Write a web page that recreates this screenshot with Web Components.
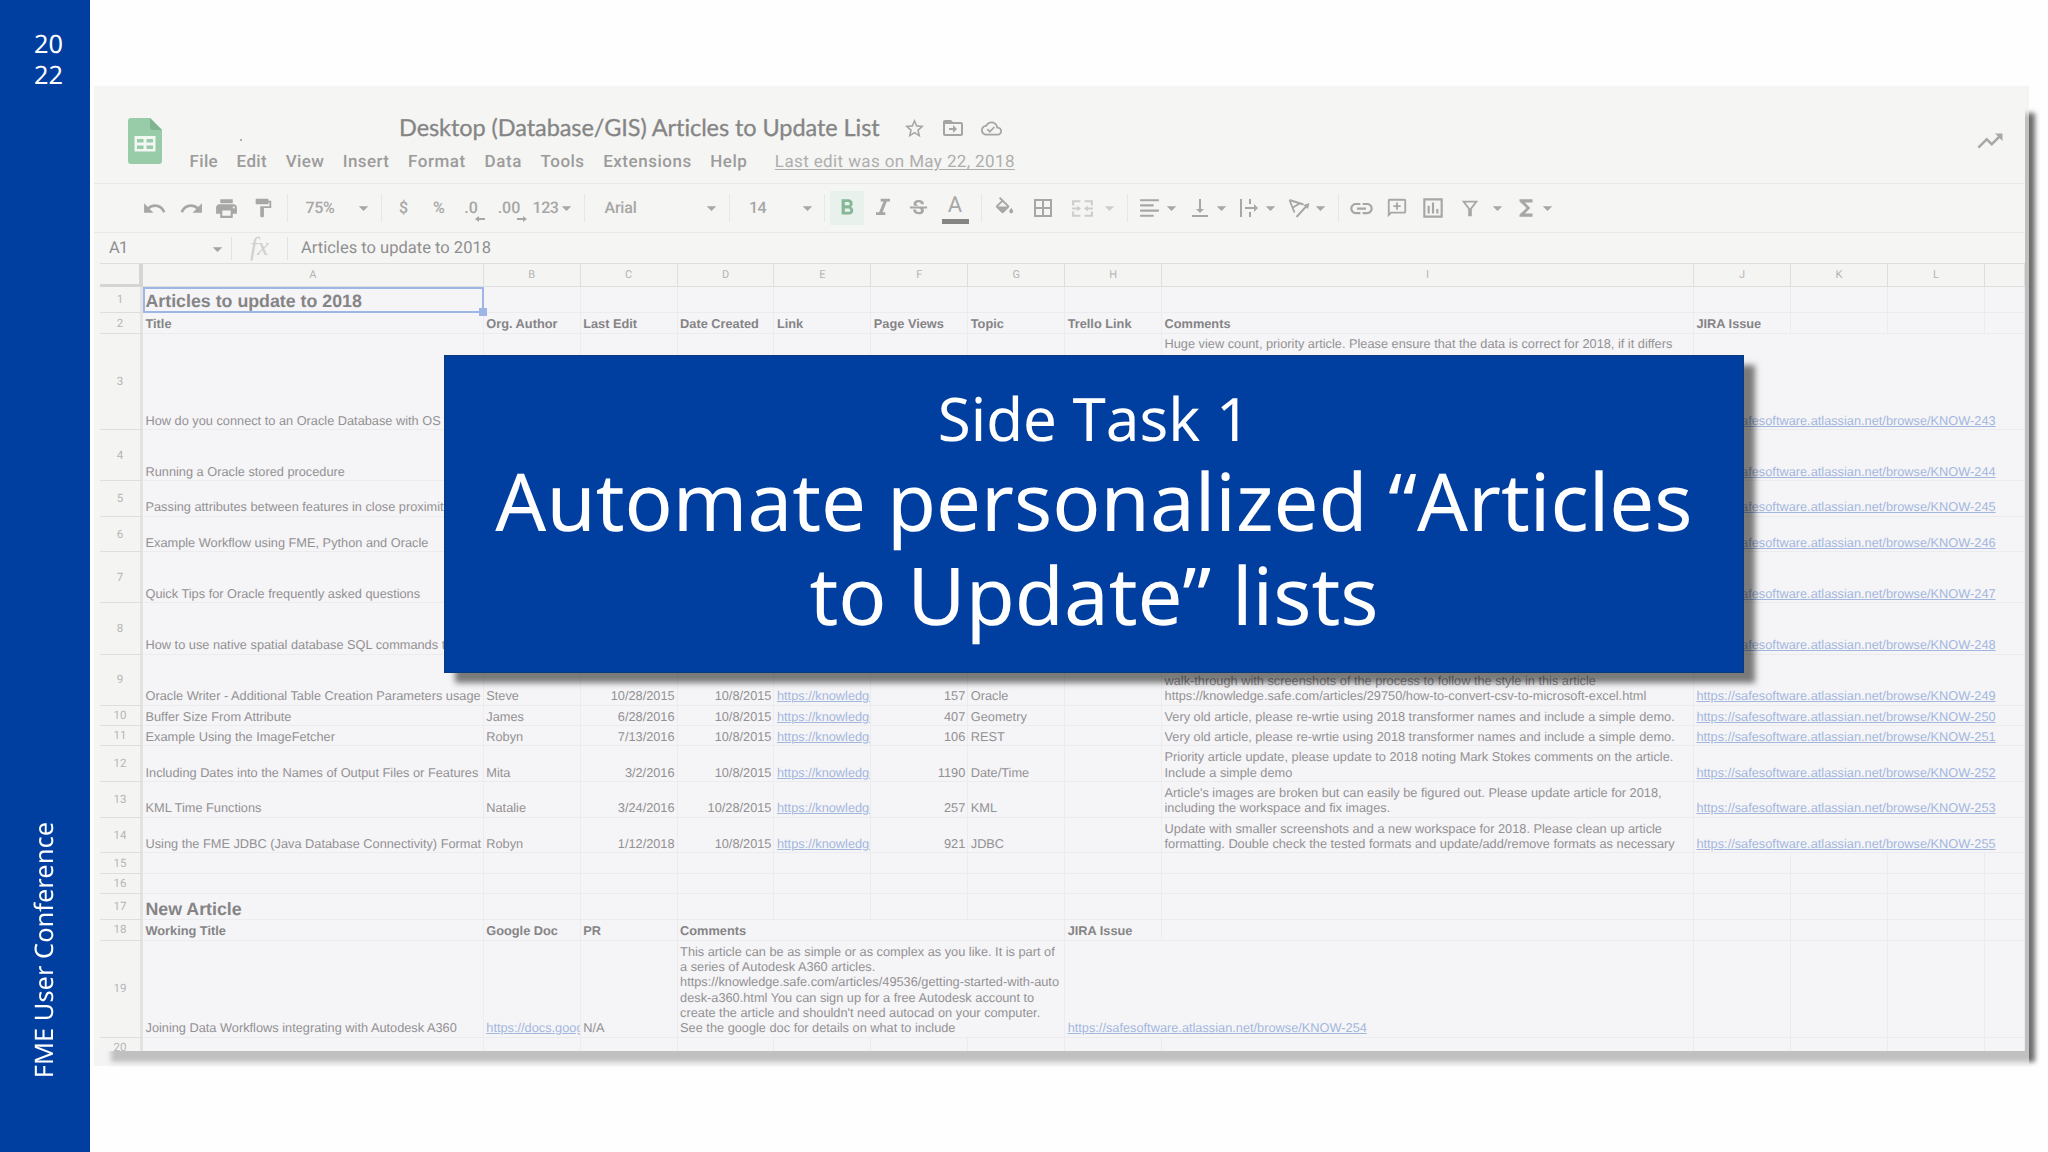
<!DOCTYPE html>
<html lang="en">
<head>
    <meta charset="UTF-8">
    <title>FME User Conference</title>
    <style>
    body{
        margin: 0;
        width: 2048px;
        height: 1152px;
        overflow: hidden;
        background: #fefefe;
        font-family: "Liberation Sans", Arial, sans-serif;
        text-rendering: geometricPrecision;
    }
    </style>
</head>
<body>
    <script>
    // puts a template into an open shadow root
    function shadow(el, html) {
        const template = document.createElement('template');
        template.innerHTML = html;
        el.attachShadow({ mode: 'open' }).appendChild(template.content.cloneNode(true));
        return el.shadowRoot;
    }

    const icons = {
        undo: '<path d="M12.5 8c-2.65 0-5.05.99-6.9 2.6L2 7v9h9l-3.62-3.62c1.39-1.16 3.16-1.88 5.12-1.88 3.54 0 6.55 2.31 7.6 5.5l2.37-.78C21.08 11.03 17.15 8 12.5 8z"/>',
        redo: '<path d="M18.4 10.6C16.55 8.99 14.15 8 11.5 8c-4.65 0-8.58 3.03-9.96 7.22L3.9 16c1.05-3.19 4.05-5.5 7.6-5.5 1.95 0 3.73.72 5.12 1.88L13 16h9V7l-3.6 3.6z"/>',
        print: '<path d="M19 8H5c-1.66 0-3 1.34-3 3v6h4v4h12v-4h4v-6c0-1.66-1.34-3-3-3zm-3 11H8v-5h8v5zm3-7c-.55 0-1-.45-1-1s.45-1 1-1 1 .45 1 1-.45 1-1 1zm-1-9H6v4h12V3z"/>',
        paint: '<path d="M18 4V3c0-.55-.45-1-1-1H5c-.55 0-1 .45-1 1v4c0 .55.45 1 1 1h12c.55 0 1-.45 1-1V6h1v4H9v11c0 .55.45 1 1 1h2c.55 0 1-.45 1-1v-9h8V4h-3z"/>',
        caret: '<path d="M6 9l6 6 6-6z"/>',
        bold: '<path d="M15.6 10.79c.97-.67 1.65-1.77 1.65-2.79 0-2.26-1.75-4-4-4H7v14h7.04c2.09 0 3.71-1.7 3.71-3.79 0-1.52-.86-2.82-2.15-3.42zM10 6.5h3c.83 0 1.5.67 1.5 1.5s-.67 1.5-1.5 1.5h-3v-3zm3.5 9H10v-3h3.5c.83 0 1.5.67 1.5 1.5s-.67 1.5-1.5 1.5z"/>',
        italic: '<path d="M10 4v2.4h2.4l-3.7 9.2H6V18h8v-2.400h-2.400l3.700-9.200H18V4z"/>',
        strike: '<path d="M6.85 7.08C6.85 4.37 9.45 3 12.24 3c1.64 0 3 .49 3.9 1.28.77.65 1.46 1.73 1.46 3.24h-3.01c0-.31-.05-.59-.15-.85-.29-.86-1.2-1.28-2.25-1.28-1.86 0-2.34 1.02-2.34 1.7 0 .48.25.88.74 1.21.38.25.77.48 1.41.7H7.39c-.21-.34-.54-.89-.54-1.92zM21 12v-2H3v2h9.62c1.15.45 1.96.75 1.96 1.97 0 1-.81 1.67-2.28 1.67-1.54 0-2.93-.54-2.93-2.51H6.4c0 .55.08 1.13.24 1.58.81 2.29 3.29 3.3 5.67 3.3 2.27 0 5.3-.89 5.3-4.05 0-.3-.01-1.16-.48-1.94H21V12z"/>',
        fill: '<path d="M16.56 8.94L7.62 0 6.21 1.41l2.38 2.38-5.15 5.15c-.59.59-.59 1.54 0 2.12l5.5 5.5c.29.29.68.44 1.06.44s.77-.15 1.06-.44l5.5-5.5c.59-.58.59-1.53 0-2.12zM5.21 10L10 5.21 14.79 10H5.21zM19 11.5s-2 2.17-2 3.5c0 1.1.9 2 2 2s2-.9 2-2c0-1.33-2-3.5-2-3.5z"/>',
        borders: '<path d="M3 3v18h18V3H3zm8 16H5v-6h6v6zm0-8H5V5h6v6zm8 8h-6v-6h6v6zm0-8h-6V5h6v6z"/>',
        merge: '<path d="M2 4h8v2H4v3H2zM14 4h8v5h-2V6h-6zM2 15h2v3h6v2H2zM20 15h2v5h-8v-2h6zM2 11h5V9l3.5 3L7 15v-2H2zM22 11h-5V9l-3.500 3 3.500 3v-2h5z"/>',
        align: '<path d="M3 3h18v2H3zM3 8h13v2H3zM3 13h18v2H3zM3 18h13v2H3z"/>',
        valign: '<path d="M16 13h-3V3h-2v10H8l4 4 4-4zM4 19v2h16v-2H4z"/>',
        wrap: '<path d="M3 3h2v18H3zM12 3h2v5h-2zM12 16h2v5h-2zM8 11h9V8l4 4-4 4v-3H8z"/>',
        rotate: '<path fill="none" stroke="currentColor" stroke-width="1.9" d="M2.500 4l14 4.500M2.500 4l5 12.500M6 11.500l6.500-4M9.500 21L20 9.500"/><path d="M22.500 7l-1.500 6-4.500-4z"/>',
        link: '<path d="M3.900 12c0-1.710 1.390-3.100 3.100-3.100h4V7H7c-2.760 0-5 2.240-5 5s2.240 5 5 5h4v-1.900H7c-1.710 0-3.100-1.390-3.100-3.100zM8 13h8v-2H8v2zm9-6h-4v1.900h4c1.710 0 3.100 1.390 3.100 3.100s-1.390 3.100-3.100 3.100h-4V17h4c2.760 0 5-2.240 5-5s-2.240-5-5-5z"/>',
        comment: '<path d="M20 2H4c-1.100 0-2 .9-2 2v18l4-4h14c1.100 0 2-.9 2-2V4c0-1.100-.9-2-2-2zm0 14H5.200L4 17.200V4h16v12zM11 14h2v-3h3V9h-3V6h-2v3H8v2h3z"/>',
        chart: '<path d="M3 3v18h18V3zm16 16H5V5h14zM7 10h2v7H7zM11 7h2v10h-2zM15 13h2v4h-2z"/>',
        filter: '<path d="M3 4h18l-7 9v8h-4v-8zm4 2l5 6.500L17 6z" fill-rule="evenodd"/>',
        sigma: '<path d="M18 4H6v2l6.500 6L6 18v2h12v-3h-7l5-5-5-5h7z"/>',
        star: '<path d="M22 9.240l-7.190-.62L12 2 9.190 8.630 2 9.240l5.460 4.730L5.820 21 12 17.270 18.180 21l-1.630-7.030L22 9.240zM12 15.400l-3.760 2.270 1-4.280-3.320-2.880 4.380-.38L12 6.100l1.710 4.040 4.380.38-3.320 2.880 1 4.280L12 15.400z"/>',
        move: '<path d="M20 6h-8l-2-2H4c-1.100 0-2 .9-2 2v12c0 1.100.9 2 2 2h16c1.100 0 2-.9 2-2V8c0-1.100-.9-2-2-2zm0 12H4V8h16v10zm-8-1l4-4-4-4v3H8v2h4z"/>',
        cloud: '<path d="M19.350 10.040C18.670 6.590 15.640 4 12 4 9.110 4 6.600 5.640 5.350 8.040 2.340 8.360 0 10.910 0 14c0 3.310 2.690 6 6 6h13c2.760 0 5-2.240 5-5 0-2.640-2.050-4.780-4.650-4.960zM19 18H6c-2.210 0-4-1.790-4-4 0-2.050 1.530-3.760 3.560-3.970l1.070-.11.5-.95C8.080 7.140 9.940 6 12 6c2.620 0 4.880 1.860 5.390 4.430l.3 1.500 1.530.11c1.560.1 2.780 1.410 2.780 2.960 0 1.650-1.350 3-3 3zm-9-3.820l-2.090-2.090L6.500 13.500 10 17l6.010-6.010-1.410-1.410z"/>',
        trend: '<path d="M16 6l2.290 2.290-4.880 4.880-4-4L2 16.590 3.410 18l6-6 4 4 6.300-6.290L22 12V6z"/>'
    };

    class UiIcon extends HTMLElement {
        connectedCallback() {
            const size = this.getAttribute('size') || 25;
            shadow(this, `
            <style>
            :host{ display: block; flex: none; width: ${size}px; height: ${size}px; }
            svg{ display: block; width: 100%; height: 100%; fill: currentColor; overflow: visible; }
            </style>
            <svg viewBox="0 0 24 24">${icons[this.getAttribute('name')]}</svg>`);
        }
    }
    customElements.define('ui-icon', UiIcon);

    // one line of text, tracked to a given width
    class FitText extends HTMLElement {
        connectedCallback() {
            const root = shadow(this, `
            <style>
            :host{ display: block; flex: none; white-space: nowrap; }
            span{ display: inline-block; text-decoration: inherit; text-underline-offset: 2px; }
            </style>
            <span><slot></slot></span>`);
            const width = Number(this.getAttribute('width'));
            const span = root.querySelector('span');
            const natural = span.getBoundingClientRect().width;
            span.style.letterSpacing = (width - natural) / this.textContent.length + 'px';
            this.style.width = width + 'px';
        }
    }
    customElements.define('fit-text', FitText);

    class SideRail extends HTMLElement {
        constructor() {
            super();
            shadow(this, `
            <style>
            :host{
                display: flex;
                flex-direction: column;
                justify-content: space-between;
                flex: none;
                box-sizing: border-box;
                width: 90px;
                height: 1152px;
                padding: 28.500px 0 73.500px;
                background: #003f9f;
                color: #fff;
                font-family: "Noto Sans", sans-serif;
                font-kerning: none;
            }
            .year{ width: 32px; margin-left: 34px; font-size: 25.300px; line-height: 31px; }
            .name{
                writing-mode: vertical-rl;
                transform: rotate(180deg);
                margin-left: 28px;
                width: 32px;
                line-height: 32px;
                font-size: 25.450px;
                white-space: nowrap;
            }
            </style>
            <div class="year"><slot name="year"></slot></div>
            <div class="name"><slot></slot></div>`);
        }
    }
    customElements.define('side-rail', SideRail);

    class SheetHead extends HTMLElement {
        constructor() {
            super();
            shadow(this, `
            <style>
            :host{
                display: flex;
                box-sizing: border-box;
                height: 97px;
                padding-left: 34px;
                color: #8b8b8a;
                font-family: Roboto, sans-serif;
            }
            .logo{ flex: none; width: 34px; height: 46px; margin-top: 32px; }
            .rows{ flex: 1; }
            .title{ display: flex; align-items: center; height: 28px; padding: 28px 0 0 237px; color: #858585; }
            .title fit-text{ font: 23.5px/28px Lato, sans-serif; -webkit-text-stroke: .3px #858585; margin-right: 22.500px; }
            .title ui-icon{ color: #a5a5a4; margin-right: 15.500px; }
            .title ui-icon + ui-icon{ margin-right: 16.500px; margin-left: -.5px; }
            .dot{ width: 2px; height: 2px; margin: -3px 0 0 78px; background: #999; border-radius: 1px; }
            .menu{ display: flex; gap: 18.600px; margin: 11px 0 0 27.500px; font-size: 17px; line-height: 20px; font-weight: 500; color: #9c9c9b; }
            .last{ margin-left: 9px; font-weight: 400; color: #aeaead; text-decoration: underline; }
            .trend{ margin: 39.500px 20px 0 0; color: #a8a8a7; }
            </style>
            <svg class="logo" viewBox="0 0 34 46">
                <path fill="#98cba8" d="M3 0h19l12 12v31a3 3 0 0 1-3 3H3a3 3 0 0 1-3-3V3a3 3 0 0 1 3-3z"/>
                <path fill="#7fb391" d="M22 0l12 12H25a3 3 0 0 1-3-3z"/>
                <path fill="#f2f7f2" d="M6.500 18h21v15.500h-21z"/>
                <path fill="#98cba8" d="M9 21h6.500v3.500H9zM18.500 21H25v3.500h-6.500zM9 27.500h6.500V31H9zM18.500 27.500H25V31h-6.500z"/>
            </svg>
            <div class="rows">
                <div class="title">
                    <fit-text width="481">Desktop (Database/GIS) Articles to Update List</fit-text>
                    <ui-icon name="star" size="23"></ui-icon>
                    <ui-icon name="move" size="24"></ui-icon>
                    <ui-icon name="cloud" size="21"></ui-icon>
                </div>
                <div class="dot"></div>
                <div class="menu">
                    <fit-text width="28.500">File</fit-text>
                    <fit-text width="30.500">Edit</fit-text>
                    <fit-text width="38.500">View</fit-text>
                    <fit-text width="46.500">Insert</fit-text>
                    <fit-text width="58">Format</fit-text>
                    <fit-text width="37.500">Data</fit-text>
                    <fit-text width="44">Tools</fit-text>
                    <fit-text width="88.500">Extensions</fit-text>
                    <fit-text width="37">Help</fit-text>
                    <fit-text class="last" width="240">Last edit was on May 22, 2018</fit-text>
                </div>
            </div>
            <ui-icon class="trend" name="trend" size="30"></ui-icon>`);
        }
    }
    customElements.define('sheet-head', SheetHead);

    // [centre, width, markup] of each tool, left to right
    const icon = (name, size) => `<ui-icon name="${name}" size="${size || 25}"></ui-icon>`;
    const caret = icon('caret', 19);
    const sep = '<i class="sep"></i>';
    const tools = [
        [154.500, 25, icon('undo')], [191, 25, icon('redo')], [226.500, 25, icon('print')], [262.500, 25, icon('paint', 22)],
        [287, 1, sep], [320, 30, '<fit-text width="29">75%</fit-text>'], [363.500, 19, caret], [381, 1, sep],
        [403.500, 10, '<span>$</span>'], [439, 14, '<span>%</span>'],
        [471, 18, '<span class="dec">.0<svg viewBox="0 0 10 6"><path d="M0 3l4-3v2h6v2H4v2z"/></svg></span>'],
        [509, 24, '<span class="dec">.00<svg viewBox="0 0 10 6"><path d="M10 3L6 0v2H0v2h6v2z"/></svg></span>'],
        [545.500, 26, '<fit-text width="26">123</fit-text>'], [566, 15, icon('caret', 19)], [584, 1, sep],
        [620.500, 32, '<fit-text width="32">Arial</fit-text>'], [711, 19, caret], [729, 1, sep],
        [757.500, 17, '<fit-text width="17">14</fit-text>'], [807, 19, caret], [824, 1, sep],
        [847, 34, '<b class="on">' + icon('bold', 26) + '</b>'], [882.500, 25, icon('italic', 28)], [918, 24, icon('strike', 23)],
        [955, 27, '<span class="colour">A</span>'], [981, 1, sep],
        [1004.500, 24, icon('fill', 23)], [1043, 24, icon('borders', 24)], [1082, 25, '<span class="off">' + icon('merge', 25) + '</span>'],
        [1109.500, 19, '<span class="off">' + caret + '</span>'], [1127, 1, sep],
        [1149.500, 25, icon('align', 25)], [1171, 17, caret], [1199.500, 24, icon('valign', 24)], [1221, 17, caret],
        [1249, 24, icon('wrap', 24)], [1270.500, 17, caret], [1299, 24, icon('rotate', 24)], [1320, 17, caret], [1338, 1, sep],
        [1361, 27, icon('link', 27)], [1397, 23, icon('comment', 22)], [1433, 27, icon('chart', 26)],
        [1470, 22, icon('filter', 22)], [1497.500, 19, caret], [1526, 24, icon('sigma', 26)], [1547.500, 17, caret]
    ];

    class SheetTools extends HTMLElement {
        constructor() {
            super();
            let end = 94;
            const items = tools.map(([centre, width, html]) => {
                const gap = centre - width / 2 - end;
                end = centre + width / 2;
                return `<div class="tool" style="margin-left:${gap}px;width:${width}px">${html}</div>`;
            }).join('');
            shadow(this, `
            <style>
            :host{
                display: flex;
                align-items: center;
                box-sizing: border-box;
                height: 49px;
                border-top: 1.500px solid #e9e9e8;
                color: #a7a7a6;
                font: 500 16px/20px Roboto, sans-serif;
            }
            .tool{ display: flex; flex: none; align-items: center; justify-content: center; height: 48px; }
            .sep{ width: 1px; height: 28px; background: #e8e8e7; }
            .dec{ position: relative; }
            .dec svg{ position: absolute; right: -7px; bottom: -4px; width: 10px; height: 6px; fill: currentColor; }
            .on{ display: flex; align-items: center; justify-content: center; width: 34px; height: 34px; background: #e9f1ec; color: #86b898; }
            .off{ opacity: .5; }
            .colour{ width: 27px; height: 31px; box-sizing: border-box; border-bottom: 5px solid #858584; text-align: center; font-size: 22px; font-weight: 400; line-height: 25px; }
            </style>
            ${items}`);
        }
    }
    customElements.define('sheet-tools', SheetTools);

    class FormulaBar extends HTMLElement {
        constructor() {
            super();
            shadow(this, `
            <style>
            :host{
                display: flex;
                align-items: center;
                box-sizing: border-box;
                height: 31px;
                padding: 1px 0 0 15px;
                border-top: 1.500px solid #e9e9e8;
                color: #8f8f8e;
                font: 16.500px/20px Roboto, sans-serif;
            }
            ui-icon{ margin: 1px 4px 0 80.500px; color: #a4a4a3; }
            i{ width: 1px; height: 23px; background: #e3e3e2; }
            em{ width: 55px; text-align: center; font: italic 26px/24px "Liberation Serif", serif; color: #d0d0cf; margin-top: -3px; }
            .value{ margin-left: 13px; }
            </style>
            <fit-text width="18.500">A1</fit-text>
            <ui-icon name="caret" size="19"></ui-icon>
            <i></i><em>fx</em><i></i>
            <fit-text class="value" width="190">Articles to update to 2018</fit-text>`);
        }
    }
    customElements.define('formula-bar', FormulaBar);

    class SheetCell extends HTMLElement {
        constructor() {
            super();
            shadow(this, `
            <style>
            :host{
                display: flex;
                flex-direction: column;
                justify-content: flex-end;
                box-sizing: border-box;
                min-width: 0;
                min-height: 0;
                padding: 0 0 1px 2.500px;
                overflow: hidden;
                white-space: pre;
                border-right: 1px solid #ecebed;
                border-bottom: 1px solid #ecebed;
            }
            :host([kind~="num"]){ text-align: right; padding-right: 2px; }
            :host([kind~="bold"]){ font-weight: bold; color: #858486; padding-bottom: 1.500px; }
            :host([kind~="big"]){ font-size: 17.800px; line-height: 20px; padding-bottom: 0; }
            :host([kind~="top"]){ justify-content: flex-start; padding-top: 2px; }
            :host([kind~="link"]){ color: #a3b7de; text-decoration: underline; }
            :host([kind~="head"]){
                justify-content: center;
                padding: 0;
                text-align: center;
                color: #b5b5b5;
                font: 11px/14px Roboto, sans-serif;
                background: #f4f4f3;
                border-color: #dededd;
            }
            :host([kind~="row"]){ font-size: 11.500px; border-right-color: #e3e3e2; border-right-width: 3px; padding: 0 0 1px 0; }
            :host([kind~="corner"]){ border-right: 4px solid #d5d5d4; border-bottom: 3px solid #d5d5d4; }
            :host([kind~="active"]){ border: 2px solid #9db6e6; padding-left: .5px; padding-bottom: 0; overflow: visible; position: relative; }
            :host([kind~="active"])::after{ content: ""; position: absolute; right: -5px; bottom: -5px; width: 8px; height: 8px; background: #9db6e6; }
            </style>
            <div><slot></slot></div>`);
        }
    }
    customElements.define('sheet-cell', SheetCell);

    const docs = 'https://knowledge.safe.com';
    const jira = n => [4, 'link', 'https://safesoftware.atlassian.net/browse/KNOW-' + n];
    const blank = n => Array.from({ length: n }, () => [1, '', '']);
    const article = (title, who, edit, made, views, topic, comment, issue) => [
        [1, '', title], [1, '', who], [1, 'num', edit], [1, 'num', made], [1, 'link', docs],
        [1, 'num', views], [1, '', topic], [1, '', ''], [1, '', comment], jira(issue)
    ];
    // rows mostly covered by the title banner
    const short = (title, comment, issue) => [[1, '', title], ...blank(7), [1, 'top', comment], jira(issue)];
    const bold = text => [1, 'bold', text];

    const rows = [
        [26.600, [[1, 'bold big active', 'Articles to update to 2018'], ...blank(12)]],
        [20.700, ['Title', 'Org. Author', 'Last Edit', 'Date Created', 'Link', 'Page Views', 'Topic', 'Trello Link', 'Comments', 'JIRA Issue', '', '', ''].map(bold)],
        [96.300, short('How do you connect to an Oracle Database with OS', 'Huge view count, priority article. Please ensure that the data is correct for 2018, if it differs', 243)],
        [50.900, short('Running a Oracle stored procedure', '', 244)],
        [35.600, short('Passing attributes between features in close proximity', '', 245)],
        [35.600, short('Example Workflow using FME, Python and Oracle', '', 246)],
        [51, short('Quick Tips for Oracle frequently asked questions', '', 247)],
        [51.200, short('How to use native spatial database SQL commands to', '', 248)],
        [51, article('Oracle Writer - Additional Table Creation Parameters usage', 'Steve', '10/28/2015', '10/8/2015', '157', 'Oracle', 'walk-through with screenshots of the process to follow the style in this article\nhttps://knowledge.safe.com/articles/29750/how-to-convert-csv-to-microsoft-excel.html', 249)],
        [20.400, article('Buffer Size From Attribute', 'James', '6/28/2016', '10/8/2015', '407', 'Geometry', 'Very old article, please re-wrtie using 2018 transformer names and include a simple demo.', 250)],
        [20.500, article('Example Using the ImageFetcher', 'Robyn', '7/13/2016', '10/8/2015', '106', 'REST', 'Very old article, please re-wrtie using 2018 transformer names and include a simple demo.', 251)],
        [35.700, article('Including Dates into the Names of Output Files or Features', 'Mita', '3/2/2016', '10/8/2015', '1190', 'Date/Time', 'Priority article update, please update to 2018 noting Mark Stokes comments on the article.\nInclude a simple demo', 252)],
        [35.700, article('KML Time Functions', 'Natalie', '3/24/2016', '10/28/2015', '257', 'KML', "Article's images are broken but can easily be figured out. Please update article for 2018,\nincluding the workspace and fix images.", 253)],
        [35.700, article('Using the FME JDBC (Java Database Connectivity) Format', 'Robyn', '1/12/2018', '10/8/2015', '921', 'JDBC', 'Update with smaller screenshots and a new workspace for 2018. Please clean up article\nformatting. Double check the tested formats and update/add/remove formats as necessary', 255)],
        [20.400, blank(13)],
        [20.300, blank(13)],
        [26, [[1, 'bold big', 'New Article'], ...blank(12)]],
        [20.400, [bold('Working Title'), bold('Google Doc'), bold('PR'), [4, 'bold', 'Comments'], bold('JIRA Issue'), ...blank(5)]],
        [97, [[1, '', 'Joining Data Workflows integrating with Autodesk A360'], [1, 'link', 'https://docs.google.com'], [1, '', 'N/A'],
            [4, '', "This article can be as simple or as complex as you like. It is part of\na series of Autodesk A360 articles.\nhttps://knowledge.safe.com/articles/49536/getting-started-with-auto\ndesk-a360.html You can sign up for a free Autodesk account to\ncreate the article and shouldn't need autocad on your computer.\nSee the google doc for details on what to include"],
            [2, 'link', 'https://safesoftware.atlassian.net/browse/KNOW-254'], ...blank(4)]],
        [20.400, blank(13)]
    ];

    class SheetGrid extends HTMLElement {
        constructor() {
            super();
            const cell = ([span, kind, text]) => `<sheet-cell kind="${kind}"${span > 1 ? ` style="grid-column:span ${span}"` : ''}>${text}</sheet-cell>`;
            const head = ['corner', ...'ABCDEFGHIJKL', ''].map(c =>
                c === 'corner' ? '<sheet-cell kind="head corner"></sheet-cell>' : cell([1, 'head', c])).join('');
            const body = rows.map(([, cells], i) => cell([1, 'head row', i + 1]) + cells.map(cell).join('')).join('');
            shadow(this, `
            <style>
            :host{
                display: grid;
                flex: 1;
                min-height: 0;
                overflow: hidden;
                margin-left: 6px;
                width: 1925px;
                box-sizing: border-box;
                grid-template-columns: 43px 340.800px repeat(7, 96.900px) 531.900px repeat(3, 97px) 40px;
                grid-template-rows: 22.700px ${rows.map(r => r[0] + 'px').join(' ')};
                border-top: 1.500px solid #dededd;
                background: #f5f4f6;
                color: #929193;
                font-size: 12.780px;
                line-height: 15.330px;
            }
            </style>
            ${head}${body}`);
        }
    }
    customElements.define('sheet-grid', SheetGrid);

    class WorkBook extends HTMLElement {
        constructor() {
            super();
            shadow(this, `
            <style>
            :host{ display: block; position: relative; width: 1935px; height: 980px; margin: 86px 0 0 4px; background: #f5f5f4; }
            .shade{ position: absolute; left: 17px; top: 27px; width: 1924px; height: 949px; background: #6c6c6c; filter: blur(2.500px); }
            .veil{ position: absolute; background: rgba(245, 244, 244, .62); }
            .right{ left: 1931px; top: 0; width: 4px; height: 980px; }
            .bottom{ left: 0; top: 965px; width: 1931px; height: 15px; }
            .page{ position: relative; display: flex; flex-direction: column; width: 1931px; height: 965px; overflow: hidden; background: #f5f5f4; }
            </style>
            <div class="shade"></div>
            <div class="veil right"></div>
            <div class="veil bottom"></div>
            <div class="page"><slot></slot></div>`);
        }
    }
    customElements.define('work-book', WorkBook);

    class TitleBanner extends HTMLElement {
        constructor() {
            super();
            shadow(this, `
            <style>
            :host{
                position: absolute;
                left: 444px;
                top: 355px;
                display: flex;
                flex-direction: column;
                align-items: center;
                box-sizing: border-box;
                width: 1300px;
                height: 318px;
                padding-top: 26px;
                border: 1px solid #0a3a7c;
                background: #003f9f;
                box-shadow: 11px 10px 6px rgba(0, 0, 0, .5);
                color: #fff;
                font: 79.850px/94px "Noto Sans", sans-serif;
                font-kerning: none;
                white-space: nowrap;
            }
            .small{ font-size: 60px; line-height: 72px; }
            </style>
            <div class="small"><slot name="kicker"></slot></div>
            <slot></slot>`);
        }
    }
    customElements.define('title-banner', TitleBanner);

    class SlidePage extends HTMLElement {
        constructor() {
            super();
            shadow(this, `
            <style>
            :host{ display: flex; align-items: flex-start; position: relative; width: 2048px; height: 1152px; overflow: hidden; }
            </style>
            <slot></slot>`);
        }
    }
    customElements.define('slide-page', SlidePage);
    </script>

    <slide-page>
        <side-rail><span slot="year">20<br>22</span>FME User Conference</side-rail>
        <work-book>
            <sheet-head></sheet-head>
            <sheet-tools></sheet-tools>
            <formula-bar></formula-bar>
            <sheet-grid></sheet-grid>
        </work-book>
        <title-banner>
            <span slot="kicker">Side Task 1</span>
            <div>Automate personalized “Articles</div>
            <div>to Update” lists</div>
        </title-banner>
    </slide-page>
</body>
</html>
